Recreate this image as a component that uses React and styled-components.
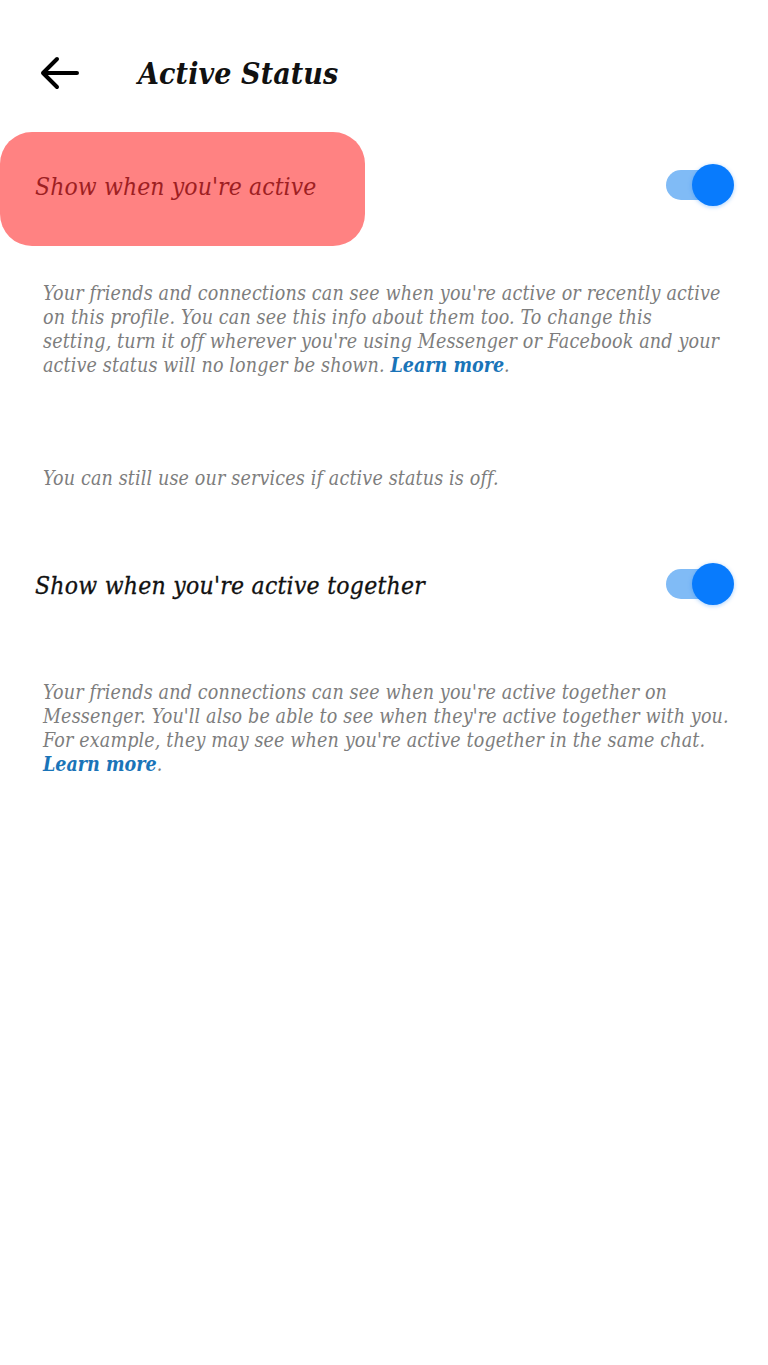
import React from "react";
import styled, { createGlobalStyle } from "styled-components";

const Global = createGlobalStyle`
  html, body { margin: 0; padding: 0; background: #fff; }
  body { font-family: "DejaVu Serif", "Liberation Serif", serif; font-style: italic; }
`;

const Page = styled.div`
  width: 768px;
  min-height: 1365px;
  background: #fff;
  display: flex;
  flex-direction: column;
`;

const Header = styled.header`
  height: 132px;
  display: flex;
  align-items: center;
  padding: 14px 0 0 38px;
  box-sizing: border-box;
  gap: 58px;
`;

const BackButton = styled.button`
  border: none;
  background: none;
  padding: 0;
  width: 42px;
  height: 36px;
  display: flex;
  align-items: center;
  justify-content: center;
  cursor: pointer;
`;

const Title = styled.h1`
  margin: 0;
  font-family: "DejaVu Serif Condensed", "DejaVu Serif", serif;
  font-stretch: condensed;
  font-style: italic;
  font-weight: 700;
  font-size: 30px;
  color: #111;
  letter-spacing: 0.1px;
`;

const Row = styled.div`
  height: 114px;
  display: flex;
  align-items: center;
  justify-content: space-between;
  padding-right: 34px;
  margin-top: ${(p) => p.$top || "0px"};
`;

const Label = styled.div`
  height: 100%;
  display: flex;
  align-items: center;
  box-sizing: border-box;
  padding-left: 35px;
  padding-bottom: ${(p) => (p.$highlight ? "6px" : "0")};
  width: ${(p) => (p.$highlight ? "365px" : "auto")};
  border-radius: 32px;
  background: ${(p) => (p.$highlight ? "#ff8282" : "transparent")};
  color: ${(p) => (p.$highlight ? "#9e1f22" : "#111")};
  font-family: "DejaVu Serif Condensed", "DejaVu Serif", serif;
  font-stretch: condensed;
  font-style: italic;
  font-size: 24.5px;
  letter-spacing: ${(p) => (p.$highlight ? "0.1px" : "0.25px")};
  -webkit-text-stroke: ${(p) => (p.$highlight ? "0" : "0.3px #111")};
`;

const Toggle = styled.div`
  position: relative;
  width: 68px;
  height: 44px;
  display: flex;
  align-items: center;
  margin-bottom: ${(p) => p.$lift || "0px"};
`;

const Track = styled.div`
  width: 54px;
  height: 30px;
  border-radius: 15px;
  background: #80bbf6;
`;

const Knob = styled.div`
  position: absolute;
  right: 0;
  top: 50%;
  transform: translateY(-50%);
  width: 42px;
  height: 42px;
  border-radius: 50%;
  background: #087bfd;
  box-shadow: 0 1px 4px rgba(8, 123, 253, 0.35);
`;

const Paragraph = styled.p`
  margin: ${(p) => p.$m};
  padding: 0 0 0 43px;
  font-family: "DejaVu Serif Condensed", "DejaVu Serif", serif;
  font-stretch: condensed;
  font-style: italic;
  font-size: 19.5px;
  line-height: 24px;
  letter-spacing: 0.15px;
  color: #7d7d7d;
  white-space: nowrap;
`;

const Link = styled.a`
  color: #1a74b8;
  font-weight: 700;
  letter-spacing: 0;
  text-decoration: none;
`;

const Switch = ({ lift }) => (
  <Toggle $lift={lift}>
    <Track />
    <Knob />
  </Toggle>
);

export default function App() {
  return (
    <>
      <Global />
      <Page>
        <Header>
          <BackButton aria-label="Back">
            <svg width="40" height="34" viewBox="0 0 40 34" fill="none">
              <path d="M38 17H4M18 3L4 17l14 14" stroke="#000" strokeWidth="4" strokeLinecap="round" strokeLinejoin="round" />
            </svg>
          </BackButton>
          <Title>Active Status</Title>
        </Header>

        <Row>
          <Label $highlight>Show when you're active</Label>
          <Switch lift="8px" />
        </Row>

        <Paragraph $m="36px 0 0">
          Your friends and connections can see when you're active or recently active
          <br />
          on this profile. You can see this info about them too. To change this
          <br />
          setting, turn it off wherever you're using Messenger or Facebook and your
          <br />
          active status will no longer be shown. <Link>Learn more</Link>.
        </Paragraph>

        <Paragraph $m="89px 0 0">You can still use our services if active status is off.</Paragraph>

        <Row $top="37px">
          <Label>Show when you're active together</Label>
          <Switch lift="2px" />
        </Row>

        <Paragraph $m="39px 0 0">
          Your friends and connections can see when you're active together on
          <br />
          Messenger. You'll also be able to see when they're active together with you.
          <br />
          For example, they may see when you're active together in the same chat.
          <br />
          <Link>Learn more</Link>.
        </Paragraph>
      </Page>
    </>
  );
}
